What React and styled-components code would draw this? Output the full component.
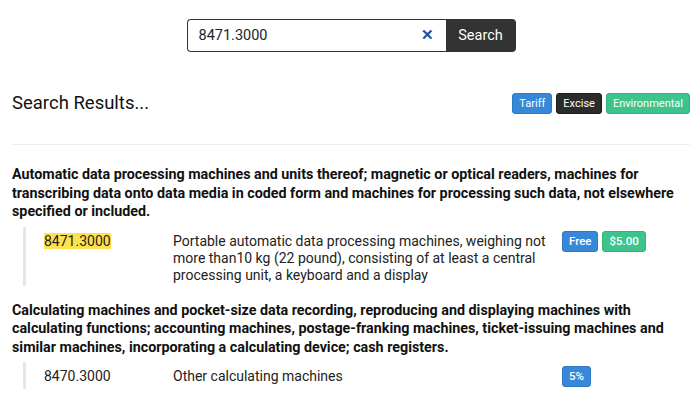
import React from "react";
import styled, { createGlobalStyle } from "styled-components";

const GlobalStyle = createGlobalStyle`
  body {
    margin: 0;
    background: #fff;
    font-family: Roboto, "Noto Sans", sans-serif;
    color: #212529;
  }
`;

const Page = styled.div`
  padding: 19px 10px 0 12px;
`;

const SearchForm = styled.form`
  display: flex;
  width: 329px;
  height: 33px;
  margin: 0 auto;
`;

const InputWrap = styled.div`
  flex: 1;
  display: flex;
  align-items: center;
  border: 1px solid #333;
  border-right: none;
  border-radius: 4px 0 0 4px;
  padding: 0 12px 0 11px;
`;

const SearchInput = styled.input`
  flex: 1;
  border: none;
  outline: none;
  font-family: inherit;
  font-size: 14.5px;
  color: #212529;
  padding: 0;
  background: transparent;
`;

const ClearButton = styled.span`
  color: #1d4f91;
  font-size: 15px;
  font-weight: 700;
  line-height: 1;
`;

const SearchButton = styled.button`
  background: #333;
  color: #fff;
  border: none;
  border-radius: 0 4px 4px 0;
  width: 70px;
  font-family: inherit;
  font-size: 14.5px;
`;

const ResultsHeader = styled.div`
  display: flex;
  justify-content: space-between;
  align-items: center;
  margin-top: 40px;
  padding-bottom: 30px;
  border-bottom: 1px solid #eceeef;
`;

const Title = styled.h2`
  margin: 0;
  font-size: 18.5px;
  font-weight: 400;
  color: #111;
`;

const BadgeGroup = styled.div`
  display: flex;
  gap: 4px;
`;

const colors = {
  blue: ["#3788d8", "#2f78c2"],
  dark: ["#2b2b2b", "#1c1c1c"],
  green: ["#3dc48c", "#35b07c"],
};

const Badge = styled.span`
  display: inline-block;
  background: ${(p) => colors[p.$tone][0]};
  border: 1px solid ${(p) => colors[p.$tone][1]};
  color: #fff;
  font-size: ${(p) => (p.$bold ? "11.5px" : "11px")};
  line-height: 13px;
  padding: 3px 6px;
  border-radius: 3px;
  font-weight: ${(p) => (p.$bold ? 500 : 400)};
`;

const Heading = styled.h3`
  margin: 20px 0 6px;
  font-size: 14.3px;
  font-weight: 700;
  line-height: 18.5px;
  color: #111;
`;

const Row = styled.div`
  display: grid;
  grid-template-columns: 129px 389px auto;
  margin-left: 11px;
  border-left: 3px solid #e6e6e6;
  padding: 6px 0 2px 18px;
  font-size: 14px;
  line-height: 17px;
  color: #222;
  & + h3 {
    margin-top: 15px;
  }
`;

const Code = styled.span`
  justify-self: start;
  background: ${(p) => (p.$highlight ? "#ffe14f" : "transparent")};
`;

const Desc = styled.div`
  padding-right: 12px;
`;

const Rates = styled.div`
  display: flex;
  gap: 4px;
  align-items: flex-start;
  margin-top: -2px;
`;

export default function App() {
  return (
    <Page>
      <GlobalStyle />
      <SearchForm onSubmit={(e) => e.preventDefault()}>
        <InputWrap>
          <SearchInput defaultValue="8471.3000" />
          <ClearButton>✕</ClearButton>
        </InputWrap>
        <SearchButton type="submit">Search</SearchButton>
      </SearchForm>

      <ResultsHeader>
        <Title>Search Results...</Title>
        <BadgeGroup>
          <Badge $tone="blue">Tariff</Badge>
          <Badge $tone="dark">Excise</Badge>
          <Badge $tone="green">Environmental</Badge>
        </BadgeGroup>
      </ResultsHeader>

      <Heading>
        Automatic data processing machines and units thereof; magnetic or optical readers, machines for
        transcribing data onto data media in coded form and machines for processing such data, not elsewhere
        specified or included.
      </Heading>
      <Row>
        <div>
          <Code $highlight>8471.3000</Code>
        </div>
        <Desc>
          Portable automatic data processing machines, weighing not more than10 kg (22 pound), consisting of at
          least a central processing unit, a keyboard and a display
        </Desc>
        <Rates>
          <Badge $tone="blue" $bold>Free</Badge>
          <Badge $tone="green" $bold>$5.00</Badge>
        </Rates>
      </Row>

      <Heading>
        Calculating machines and pocket-size data recording, reproducing and displaying machines with
        calculating functions; accounting machines, postage-franking machines, ticket-issuing machines and
        similar machines, incorporating a calculating device; cash registers.
      </Heading>
      <Row>
        <div>
          <Code>8470.3000</Code>
        </div>
        <Desc>Other calculating machines</Desc>
        <Rates>
          <Badge $tone="blue" $bold>5%</Badge>
        </Rates>
      </Row>
    </Page>
  );
}
